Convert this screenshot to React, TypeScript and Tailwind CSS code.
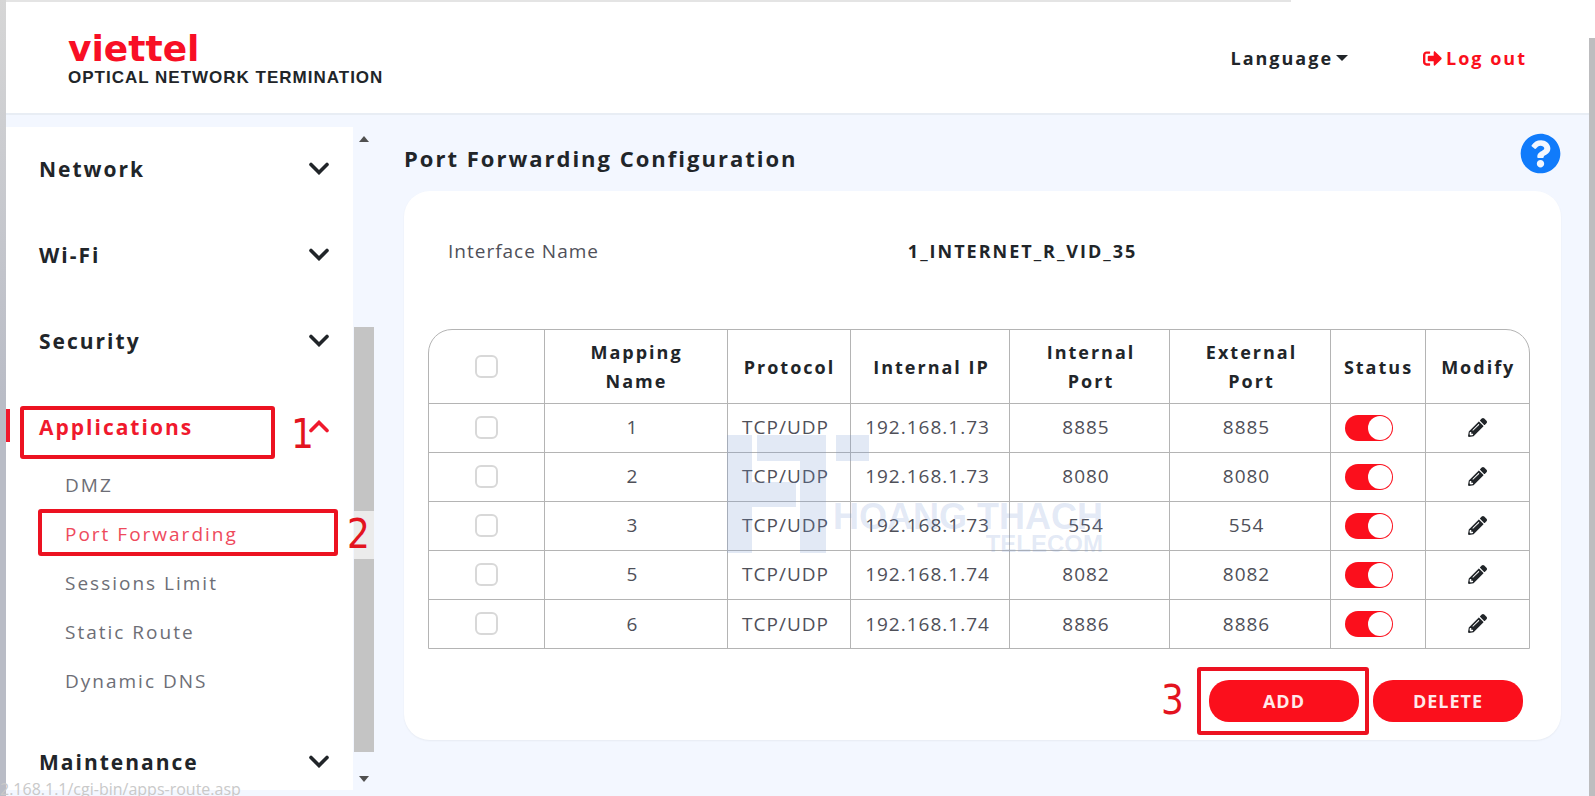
import { useState } from "react";
import { FaPencilAlt, FaQuestionCircle, FaSignOutAlt } from "react-icons/fa";
import clsx from "clsx";

type Mapping = {
  name: string;
  protocol: string;
  ip: string;
  internalPort: string;
  externalPort: string;
};

const mappings: Mapping[] = [
  { name: "1", protocol: "TCP/UDP", ip: "192.168.1.73", internalPort: "8885", externalPort: "8885" },
  { name: "2", protocol: "TCP/UDP", ip: "192.168.1.73", internalPort: "8080", externalPort: "8080" },
  { name: "3", protocol: "TCP/UDP", ip: "192.168.1.73", internalPort: "554", externalPort: "554" },
  { name: "5", protocol: "TCP/UDP", ip: "192.168.1.74", internalPort: "8082", externalPort: "8082" },
  { name: "6", protocol: "TCP/UDP", ip: "192.168.1.74", internalPort: "8886", externalPort: "8886" },
];

const appLinks = [
  "DMZ",
  "Port Forwarding",
  "Sessions Limit",
  "Static Route",
  "Dynamic DNS",
];

const Chevron = ({ up = false }: { up?: boolean }) => (
  <svg
    width="20"
    height="13"
    viewBox="0 0 20 13"
    fill="none"
    stroke="currentColor"
    strokeWidth="3.6"
    strokeLinecap="round"
  >
    <path d={up ? "M2 10.5L10 2.5L18 10.5" : "M2 2.5L10 10.5L18 2.5"} />
  </svg>
);

// Red frame around a step of the guide
const Frame = ({ className }: { className: string }) => (
  <span
    className={clsx(
      "pointer-events-none absolute rounded-[3px] border-4 border-[#ec1221]",
      className
    )}
  />
);

const StepNumber = ({ n, className }: { n: number; className: string }) => (
  <span
    className={clsx(
      "pointer-events-none absolute font-['DejaVu_Sans_Condensed','DejaVu_Sans',sans-serif] text-[40px] leading-[40px] font-normal tracking-normal text-[#e3141f]",
      className
    )}
  >
    {n}
  </span>
);

const menuButton =
  "relative flex h-[86px] w-full items-center justify-between pr-6 pb-1 pl-[33px] text-[21px] font-bold tracking-[2px]";

const MenuItem = ({ label }: { label: string }) => (
  <li>
    <button className={menuButton}>
      <span className="pt-1">{label}</span>
      <Chevron />
    </button>
  </li>
);

const Sidebar = () => (
  <nav className="w-[347px] shrink-0 bg-white">
    <ul>
      <MenuItem label="Network" />
      <MenuItem label="Wi-Fi" />
      <MenuItem label="Security" />
      <li>
        <button className={clsx(menuButton, "text-[#f0192d]")}>
          <span className="absolute top-6 left-0 h-[33px] w-1 bg-[#f0192d]" />
          <span className="pt-1">Applications</span>
          <Chevron up />
          <Frame className="top-[21px] left-3.5 h-[53px] w-[255px]" />
          <StepNumber n={1} className="top-[29px] left-[285px]" />
        </button>
        <ul className="-mt-2.5 mb-3.5">
          {appLinks.map((link) => {
            const active = link === "Port Forwarding";
            return (
              <li key={link} className="relative">
                <a
                  href="#"
                  className={clsx(
                    "flex h-[49px] items-center pl-[59px] text-[19px] tracking-[2px]",
                    active ? "text-[#ee4a5c]" : "text-[#6d6e76]"
                  )}
                >
                  {link}
                </a>
                {active && (
                  <>
                    <Frame className="-top-px left-8 h-[47px] w-[300px]" />
                    <StepNumber n={2} className="top-1 left-[341px] z-10" />
                  </>
                )}
              </li>
            );
          })}
        </ul>
      </li>
      <MenuItem label="Maintenance" />
    </ul>
  </nav>
);

const Scrollbar = () => (
  <div className="flex w-[21px] shrink-0 flex-col items-center pl-px">
    <svg width="10" height="6" viewBox="0 0 10 6" className="mt-[9px] shrink-0 fill-[#505050]">
      <path d="M5 0L10 6H0Z" />
    </svg>
    <div className="mt-[185px] h-[184px] w-full shrink-0 bg-[#c4c4c4]" />
    <div className="h-12 w-full shrink-0 bg-[#ebebeb]" />
    <div className="h-[193px] w-full shrink-0 bg-[#c4c4c4]" />
    <svg width="10" height="6" viewBox="0 0 10 6" className="mt-6 shrink-0 fill-[#505050]">
      <path d="M0 0H10L5 6Z" />
    </svg>
  </div>
);

const Header = () => (
  <header className="flex h-[113px] shrink-0 items-start justify-between border-b-2 border-[#e8edf4] bg-white pr-[62px] pl-[62px]">
    <div className="pt-[29px]">
      <div className="font-['DejaVu_Sans',sans-serif] text-[36px] leading-[36px] font-bold text-[#f80f25]">
        viettel
      </div>
      <div className="pt-px font-['Liberation_Sans',Arial,sans-serif] text-[17px] leading-[20px] font-bold tracking-[1px]">
        OPTICAL NETWORK TERMINATION
      </div>
    </div>
    <div className="flex gap-[75px] pt-[43px] text-[18px] leading-[26px] font-bold tracking-[2px]">
      <button className="flex items-center gap-[3px]">
        Language
        <svg width="12" height="6" viewBox="0 0 12 6" fill="currentColor">
          <path d="M0 0H12L6 6Z" />
        </svg>
      </button>
      <a href="#" className="flex items-center gap-1 text-[#fb0f1c]">
        <FaSignOutAlt size={19} />
        Log out
      </a>
    </div>
  </header>
);

const Watermark = () => (
  <div className="pointer-events-none absolute top-[106px] left-[299px] flex text-[#6f93cf]/20">
    <svg width="142" height="118" viewBox="0 0 142 118" fill="currentColor" className="shrink-0">
      <path d="M0 0H25V47H69V72H25V118H0Z" />
      <path d="M30 0H99V118H73V26H30Z" />
      <path d="M109 0H142V26H109Z" />
    </svg>
    <div className="-ml-9 flex flex-col items-end pt-16 font-['Liberation_Sans',Arial,sans-serif] font-bold whitespace-nowrap">
      <span className="text-[36px] leading-[36px]">HOANG THACH</span>
      <span className="text-[24px] leading-[18px]">TELECOM</span>
    </div>
  </div>
);

const tick =
  "block size-[23px] mx-auto appearance-none rounded-[6px] border-2 border-[#d8d8d8] bg-white checked:bg-[#fb0f1c]";

const MappingTable = () => {
  const [enabled, setEnabled] = useState<string[]>(mappings.map((m) => m.name));
  const toggle = (name: string) =>
    setEnabled((list) =>
      list.includes(name) ? list.filter((n) => n !== name) : [...list, name]
    );

  return (
    <div className="relative">
      <div className="overflow-hidden rounded-t-[24px] border border-[#b4b4b4]">
        <table className="w-full table-fixed text-center text-[19px] tracking-[1px] [&_td]:border-t [&_td]:border-[#b4b4b4] [&_td+td]:border-l [&_th+th]:border-l [&_th+th]:border-[#b4b4b4]">
          <colgroup>
            <col className="w-[115px]" />
            <col className="w-[183px]" />
            <col className="w-[123px]" />
            <col className="w-[159px]" />
            <col className="w-[160px]" />
            <col className="w-[161px]" />
            <col className="w-[95px]" />
            <col className="w-[104px]" />
          </colgroup>
          <thead>
            <tr className="h-[73px] text-[18px] leading-[29px] tracking-[2px]">
              <th>
                <input type="checkbox" aria-label="Select all" className={tick} />
              </th>
              <th className="pt-0.5 pr-10 pl-[42px]">Mapping Name</th>
              <th className="pt-0.5 pl-0.5">Protocol</th>
              <th className="pt-0.5 pl-1">Internal IP</th>
              <th className="pt-0.5 pr-8 pl-9">Internal Port</th>
              <th className="pt-0.5 pr-8 pl-9">External Port</th>
              <th className="pt-0.5 pl-0.5">Status</th>
              <th className="pt-0.5 pl-0.5">Modify</th>
            </tr>
          </thead>
          <tbody className="text-[#4f5059]">
            {mappings.map((m) => (
              <tr key={m.name} className="h-[49px]">
                <td>
                  <input
                    type="checkbox"
                    aria-label={`Select mapping ${m.name}`}
                    className={tick}
                  />
                </td>
                <td className="pr-1.5">{m.name}</td>
                <td className="pr-1.5">{m.protocol}</td>
                <td className="pr-1">{m.ip}</td>
                <td className="pr-1.5">{m.internalPort}</td>
                <td className="pr-1.5">{m.externalPort}</td>
                <td className="pl-3.5">
                  <input
                    type="checkbox"
                    role="switch"
                    aria-label={`Status of mapping ${m.name}`}
                    checked={enabled.includes(m.name)}
                    onChange={() => toggle(m.name)}
                    className="block h-[26px] w-12 appearance-none rounded-full bg-[#c4c4c4] p-px before:block before:size-6 before:rounded-full before:bg-white checked:bg-[#fb0f1c] checked:before:ml-[22px]"
                  />
                </td>
                <td>
                  <button
                    aria-label={`Modify mapping ${m.name}`}
                    className="block mx-auto text-[#212529]"
                  >
                    <FaPencilAlt size={19} />
                  </button>
                </td>
              </tr>
            ))}
          </tbody>
        </table>
      </div>
      <Watermark />
    </div>
  );
};

const redButton =
  "h-[42px] w-[150px] rounded-[20px] bg-[#fb0f1c] text-[18px] font-bold tracking-[1px] text-[#ffe9ea]";

const Content = () => (
  <main className="min-w-0 flex-1 pr-7 pl-[30px]">
    <div className="flex h-[76px] items-center justify-between">
      <h1 className="pt-2.5 text-[22px] leading-[30px] font-bold tracking-[2px]">
        Port Forwarding Configuration
      </h1>
      <button aria-label="Help" className="text-[#107bfb]">
        <FaQuestionCircle size={41} />
      </button>
    </div>
    <section className="rounded-[26px] bg-white pt-[45px] pr-[31px] pb-[18px] pl-6 shadow-xs">
      <dl className="mb-[63px] grid grid-cols-[17fr_23fr] pl-5 leading-[30px]">
        <dt className="text-[19px] tracking-[1px] text-[#4f5059]">
          Interface Name
        </dt>
        <dd className="text-[18px] font-bold tracking-[2px]">
          1_INTERNET_R_VID_35
        </dd>
      </dl>
      <MappingTable />
      <div className="mt-[31px] flex justify-end gap-3.5 pr-[7px]">
        <div className="relative">
          <button className={redButton}>ADD</button>
          <Frame className="-inset-y-[13px] -right-2.5 -left-3" />
          <StepNumber n={3} className="top-0 -left-12" />
        </div>
        <button className={redButton}>DELETE</button>
      </div>
    </section>
  </main>
);

export default function App() {
  return (
    <div className="relative flex h-screen overflow-hidden bg-white font-['Open_Sans',sans-serif] text-[#212529]">
      <div className="w-1.5 shrink-0 bg-linear-to-b from-[#d6d6d6] via-[#b9bcc6] to-[#b9bcc6]" />
      <div className="flex min-w-0 flex-1 flex-col">
        <div className="mr-[298px] h-0.5 shrink-0 bg-[#e4e4e4]" />
        <Header />
        <div className="flex min-h-0 flex-1 bg-[#f3f7ff]">
          <div className="flex pt-3 pb-1.5">
            <Sidebar />
            <Scrollbar />
          </div>
          <Content />
        </div>
      </div>
      <div className="mt-[38px] w-1.5 shrink-0 bg-[#bdbdbf]" />
      {/* browser's link hint */}
      <div className="absolute -bottom-1 left-0 text-[16px] leading-[22px] whitespace-nowrap text-[#c9c9c9]">
        2.168.1.1/cgi-bin/apps-route.asp
      </div>
    </div>
  );
}
